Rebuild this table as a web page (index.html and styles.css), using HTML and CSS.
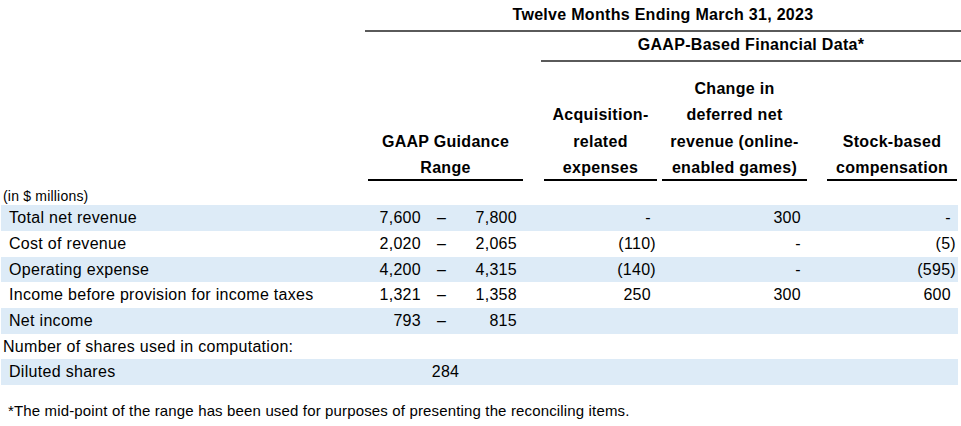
FILE: index.html
```html
<!DOCTYPE html>
<html lang="en">
<head>
<meta charset="utf-8">
<title>GAAP Guidance Reconciliation</title>
<link rel="stylesheet" href="styles.css">
</head>
<body>
<div class="sheet">
  <div class="span-head top">Twelve Months Ending March 31, 2023</div>
  <div class="span-head sub">GAAP-Based Financial Data*</div>

  <div class="grid colheads">
    <div class="ch c-range"><div class="t">GAAP Guidance<br>Range</div></div>
    <div class="ch c-acq"><div class="t">Acquisition-<br>related<br>expenses</div></div>
    <div class="ch c-chg"><div class="t">Change in<br>deferred net<br>revenue (online-<br>enabled games)</div></div>
    <div class="ch c-stock"><div class="t">Stock-based<br>compensation</div></div>
  </div>

  <div class="units">(in $ millions)</div>

  <div class="grid row band">
    <div class="lbl">Total net revenue</div>
    <div class="c-range rng"><span class="lo">7,600</span><span class="dash">–</span><span class="hi">7,800</span></div>
    <div class="c-acq num">-</div>
    <div class="c-chg num">300</div>
    <div class="c-stock num">-</div>
  </div>
  <div class="grid row">
    <div class="lbl">Cost of revenue</div>
    <div class="c-range rng"><span class="lo">2,020</span><span class="dash">–</span><span class="hi">2,065</span></div>
    <div class="c-acq num neg">(110)</div>
    <div class="c-chg num">-</div>
    <div class="c-stock num neg">(5)</div>
  </div>
  <div class="grid row band">
    <div class="lbl">Operating expense</div>
    <div class="c-range rng"><span class="lo">4,200</span><span class="dash">–</span><span class="hi">4,315</span></div>
    <div class="c-acq num neg">(140)</div>
    <div class="c-chg num">-</div>
    <div class="c-stock num neg">(595)</div>
  </div>
  <div class="grid row">
    <div class="lbl">Income before provision for income taxes</div>
    <div class="c-range rng"><span class="lo">1,321</span><span class="dash">–</span><span class="hi">1,358</span></div>
    <div class="c-acq num">250</div>
    <div class="c-chg num">300</div>
    <div class="c-stock num">600</div>
  </div>
  <div class="grid row band">
    <div class="lbl">Net income</div>
    <div class="c-range rng"><span class="lo">793</span><span class="dash">–</span><span class="hi">815</span></div>
  </div>
  <div class="grid row">
    <div class="lbl flush">Number of shares used in computation:</div>
  </div>
  <div class="grid row band">
    <div class="lbl">Diluted shares</div>
    <div class="c-range center">284</div>
  </div>

  <p class="note">*The mid-point of the range has been used for purposes of presenting the reconciling items.</p>
</div>
</body>
</html>
```

FILE: styles.css
```css
html, body {
  margin: 0;
  padding: 0;
  background: #ffffff;
}

body {
  font-family: "Liberation Sans", Arial, sans-serif;
  font-size: 16px;
  letter-spacing: 0.3px;
  color: #000000;
}

.sheet {
  width: 957px;
  margin-left: 1px;
}

.span-head {
  box-sizing: border-box;
  height: 32px;
  padding-top: 2px;
  line-height: 26px;
  font-weight: bold;
  text-align: center;
  border-bottom: 2px solid #5a5a5a;
  margin-right: -3px;
}

.span-head.top {
  margin-left: 364px;
}

.span-head.sub {
  height: 30px;
  padding-top: 0;
  margin-left: 540px;
}

.grid {
  display: grid;
  grid-template-columns: 367px 155px 21px 113px 5px 145px 20px 130px 1px;
}

.c-range { grid-column: 2; }
.c-acq { grid-column: 4; }
.c-chg { grid-column: 6; }
.c-stock { grid-column: 8; }

.colheads {
  padding-top: 14px;
}

.ch {
  display: flex;
  flex-direction: column;
  justify-content: flex-end;
  text-align: center;
  font-weight: bold;
  line-height: 26.3px;
  border-bottom: 2px solid #000000;
}

.ch .t {
  margin-bottom: -2px;
}

.units {
  box-sizing: border-box;
  height: 24px;
  padding-top: 7px;
  padding-left: 2px;
  font-size: 14px;
  line-height: 16px;
  letter-spacing: 0.2px;
}

.row {
  height: 25.7px;
  line-height: 25.7px;
  white-space: nowrap;
}

.band {
  background: #ddebf7;
}

.lbl {
  grid-column: 1;
  padding-left: 8px;
}

.lbl.flush {
  padding-left: 2px;
}

.rng {
  display: grid;
  grid-template-columns: 53px 41px 55px 6px;
}

.rng .lo {
  text-align: right;
}

.rng .dash {
  text-align: center;
}

.rng .hi {
  text-align: right;
}

.num {
  text-align: right;
  padding-right: 6px;
}

.num.neg {
  padding-right: 1px;
}

.center {
  text-align: center;
}

.note {
  margin: 16px 0 0 7px;
  font-size: 15px;
  line-height: 20px;
  letter-spacing: 0.15px;
}
```
